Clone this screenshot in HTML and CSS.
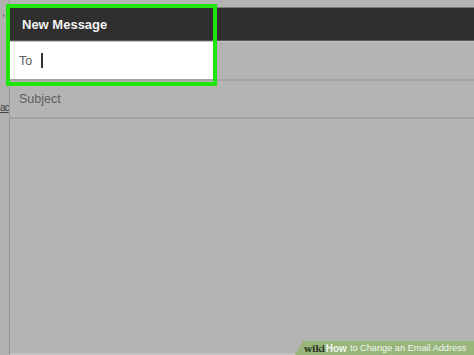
FILE: index.html
```html
<!DOCTYPE html>
<html>

<head>
    <title>New Message</title>
    <link rel="stylesheet" href="styles.css">
</head>

<body>
    <div class="screen">
        <div class="side">
            <span class="side-mark">,</span>
            <span class="side-link">ac</span>
        </div>
        <div class="main">
            <div class="titlebar">
                <span class="title">New Message</span>
            </div>
            <div class="row to-row">
                <div class="to-field">
                    <span class="label">To</span>
                    <span class="caret"></span>
                </div>
            </div>
            <div class="row subject-row">
                <span class="label">Subject</span>
            </div>
            <div class="body-area"></div>
        </div>
        <div class="highlight"></div>
        <div class="wikihow">
            <span class="wiki">wiki</span><span class="how">How</span>
            <span class="caption">to Change an Email Address</span>
        </div>
    </div>
</body>

</html>
```

FILE: styles.css
```css
body {
    margin: 0;
    padding: 0;
    background-color: #b4b4b4;
    font-family: "Liberation Sans", Arial, sans-serif;
}

.screen {
    position: relative;
    display: flex;
    width: 474px;
    height: 355px;
    overflow: hidden;
}

.side {
    position: relative;
    width: 9px;
    flex-shrink: 0;
    background-color: #b1b1b1;
    border-right: 1px solid #9a9a9a;
    overflow: hidden;
}

.side-mark {
    position: absolute;
    top: 6px;
    left: 2px;
    font-size: 11px;
    color: #555;
}

.side-link {
    position: absolute;
    top: 102px;
    left: 0;
    font-size: 10px;
    letter-spacing: -0.9px;
    color: #444;
    text-decoration: underline;
}

.main {
    flex: 1;
    display: flex;
    flex-direction: column;
    padding-top: 7px;
}

.titlebar {
    height: 34px;
    background-color: #2f2f2f;
    border-top: 1px solid #7c7c7c;
    border-bottom: 1px solid #555;
    display: flex;
    align-items: center;
    padding-left: 12px;
    box-sizing: border-box;
}

.title {
    color: #f4f4f4;
    font-size: 13px;
    font-weight: bold;
}

.row {
    display: flex;
    align-items: center;
    border-bottom: 2px solid #a3a3a3;
    box-sizing: border-box;
}

.label {
    color: #5e5e5e;
    font-size: 12.5px;
}

.to-row {
    height: 40px;
    border-top: 1px solid #c4c4c4;
}

.to-field {
    width: 203px;
    height: 100%;
    background-color: #fff;
    display: flex;
    align-items: center;
    padding-left: 9px;
    box-sizing: border-box;
}

.caret {
    width: 1.5px;
    height: 15px;
    background-color: #333;
    margin-left: 9px;
}

.subject-row {
    height: 38px;
    padding-left: 9px;
}

.body-area {
    flex: 1;
    border-bottom: 2px solid #c2c2c2;
}

.highlight {
    position: absolute;
    left: 6px;
    top: 4px;
    width: 211px;
    height: 82px;
    border: 4px solid #1ee60c;
    box-sizing: border-box;
}

.wikihow {
    position: absolute;
    left: 295px;
    bottom: 0;
    width: 179px;
    height: 14px;
    background-color: #98b57c;
    clip-path: polygon(8px 0, 100% 0, 100% 100%, 0 100%);
    display: flex;
    align-items: center;
    padding-left: 9px;
    box-sizing: border-box;
    white-space: nowrap;
}

.wiki {
    font-family: "DejaVu Serif", serif;
    font-weight: bold;
    font-size: 9.5px;
    letter-spacing: -0.3px;
    color: #2e3a24;
}

.how {
    font-weight: bold;
    font-size: 10px;
    color: #f2f6ee;
    margin-left: 1px;
}

.caption {
    font-size: 9.2px;
    color: #f2f6ee;
    margin-left: 3px;
}
```
